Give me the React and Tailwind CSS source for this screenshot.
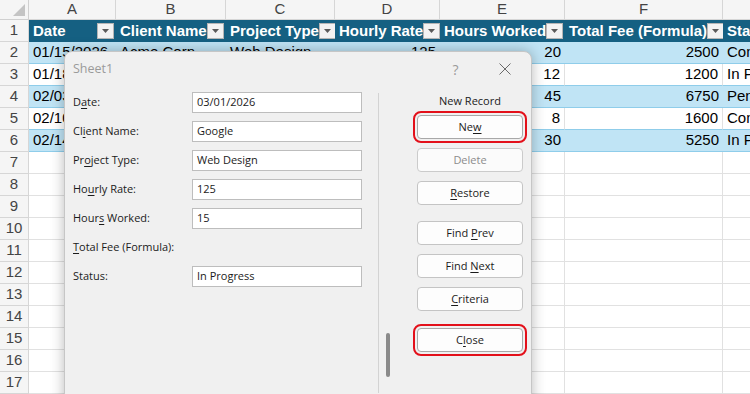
import React from "react";

const colW = ["w-[87px]", "w-[110px]", "w-[109px]", "w-[105px]", "w-[125px]", "w-[158px]", "w-[110px]"];
const letters = ["A", "B", "C", "D", "E", "F", "G"];
const headers = ["Date", "Client Name", "Project Type", "Hourly Rate", "Hours Worked", "Total Fee (Formula)", "Status"];
const rows = [
  ["01/15/2026", "Acme Corp", "Web Design", "125", "20", "2500", "Completed"],
  ["01/18/2026", "Beta LLC", "SEO Audit", "100", "12", "1200", "In Progress"],
  ["02/03/2026", "Cobalt Inc", "App Build", "150", "45", "6750", "Pending"],
  ["02/10/2026", "Delta Co", "Consulting", "200", "8", "1600", "Completed"],
  ["02/14/2026", "Echo Media", "Branding", "175", "30", "5250", "In Progress"],
];
const numeric = [false, false, false, true, true, true, false];

function DropBtn() {
  return (
    <div className="w-[17px] h-[16px] shrink-0 bg-[#f2f2f2] border border-[#b5b5b5] flex items-center justify-center">
      <svg width="7" height="4" viewBox="0 0 7 4">
        <polygon points="0,0 7,0 3.5,4" fill="#5a5a5a" />
      </svg>
    </div>
  );
}

function RowHead({ n }) {
  return (
    <div className="w-[29px] shrink-0 h-full bg-[#f5f5f5] border-r border-b border-[#d6d6d6] flex items-center justify-center text-[15px] text-[#444]">
      {n}
    </div>
  );
}

function Btn({ children, def, disabled }) {
  return (
    <div
      className={
        def
          ? "h-[24px] w-full bg-[#fdfdfd] border border-[#a8a8a8] rounded-[4px] flex items-center justify-center outline-2 outline-[#e3101a] outline-offset-[2px] text-[#1b1b1b]"
          : disabled
          ? "h-[24px] w-full bg-[#fbfbfb] border border-[#cbcbcb] rounded-[4px] flex items-center justify-center text-[#8c8c8c]"
          : "h-[24px] w-full bg-[#fdfdfd] border border-[#c4c4c4] rounded-[4px] flex items-center justify-center text-[#1b1b1b]"
      }
    >
      <span className="whitespace-pre">{children}</span>
    </div>
  );
}

const U = ({ children }) => <span className="underline underline-offset-2">{children}</span>;

function Field({ label, value }) {
  return (
    <div className="h-[21px] flex items-center">
      <div className="w-[119px] shrink-0 whitespace-pre">{label}</div>
      {value !== undefined && (
        <div className="w-[170px] h-[21px] bg-white border border-[#bdbdbd] flex items-center px-[4px]">{value}</div>
      )}
    </div>
  );
}

export default function App() {
  return (
    <div className="relative w-[750px] h-[394px] overflow-hidden bg-white font-['Liberation_Sans',Arial,sans-serif]">
      {/* column headers */}
      <div className="flex h-[20px]">
        <div className="w-[29px] shrink-0 h-full bg-[#f5f5f5] border-r border-b border-[#d0d0d0] flex items-end justify-end p-[3px]">
          <svg width="12" height="12" viewBox="0 0 12 12">
            <polygon points="12,0 12,12 0,12" fill="#c4c4c4" />
          </svg>
        </div>
        {letters.map((l, i) => (
          <div
            key={l}
            className={`${colW[i]} shrink-0 h-full bg-[#f5f5f5] border-r border-b border-[#d6d6d6] flex items-center justify-center text-[15px] text-[#444]`}
          >
            {l}
          </div>
        ))}
      </div>
      {/* table header row */}
      <div className="flex h-[22px]">
        <RowHead n={1} />
        {headers.map((h, i) => (
          <div
            key={h}
            className={`${colW[i]} shrink-0 h-full bg-[#156082] flex items-center justify-between pl-[4px] pr-[2px] overflow-hidden whitespace-nowrap`}
          >
            <span className="text-[15px] font-bold text-white">{h}</span>
            <DropBtn />
          </div>
        ))}
      </div>
      {/* data rows */}
      {rows.map((r, ri) => {
        const blue = ri % 2 === 0;
        return (
          <div key={ri} className="flex h-[22px]">
            <RowHead n={ri + 2} />
            {r.map((c, ci) => (
              <div
                key={ci}
                className={
                  (blue
                    ? "bg-[#c0e4f5] border-b border-[#8fcdea] "
                    : "bg-white border-b border-r border-b-[#8fcdea] border-r-[#e1e1e1] ") +
                  colW[ci] +
                  " shrink-0 h-full flex items-center px-[4px] overflow-hidden whitespace-nowrap text-[15px] text-black " +
                  (numeric[ci] ? "justify-end" : "justify-start")
                }
              >
                {c}
              </div>
            ))}
          </div>
        );
      })}
      {/* empty rows */}
      {[7, 8, 9, 10, 11, 12, 13, 14, 15, 16, 17].map((n) => (
        <div key={n} className="flex h-[22px]">
          <RowHead n={n} />
          {colW.map((w, i) => (
            <div key={i} className={`${w} shrink-0 h-full border-r border-b border-[#e1e1e1] bg-white`} />
          ))}
        </div>
      ))}

      {/* data form dialog */}
      <div className="absolute left-[64px] top-[51px] w-[468px] h-[360px] bg-[#f0f0f0] border border-[#c6c6c6] rounded-t-[8px] shadow-[0_0_14px_rgba(0,0,0,0.28)] font-['Open_Sans',sans-serif] text-[11px] text-[#1b1b1b]">
        <div className="h-[34px] flex items-center pl-[8px] pr-[2px]">
          <span className="text-[12.5px] text-[#9a9a9a]">Sheet1</span>
          <div className="ml-auto flex items-center">
            <div className="w-[49px] flex justify-center text-[14px] text-[#9a9a9a]">?</div>
            <div className="w-[49px] flex justify-center">
              <svg width="12" height="12" viewBox="0 0 12 12">
                <path d="M0.5 0.5 L11.5 11.5 M11.5 0.5 L0.5 11.5" stroke="#6a6a6a" strokeWidth="1" fill="none" />
              </svg>
            </div>
          </div>
        </div>
        <div className="flex">
          <div className="w-[313px] shrink-0 pl-[8px] pt-[6px] flex flex-col gap-[8px]">
            <Field label={<>D<U>a</U>te:</>} value="03/01/2026" />
            <Field label={<>Cl<U>i</U>ent Name:</>} value="Google" />
            <Field label={<>Pr<U>o</U>ject Type:</>} value="Web Design" />
            <Field label={<>Ho<U>u</U>rly Rate:</>} value="125" />
            <Field label={<>Hour<U>s</U> Worked:</>} value="15" />
            <Field label={<><U>T</U>otal Fee (Formula):</>} />
            <Field label="Status:" value="In Progress" />
          </div>
          <div className="w-[39px] shrink-0 mt-[7px] h-[300px] border-l border-[#d3d3d3] pt-[240px] pl-[7px]">
            <div className="w-[4px] h-[44px] bg-[#8a8a8a] rounded-full" />
          </div>
          <div className="w-[106px] shrink-0 pt-[7px] flex flex-col">
            <div className="h-[16px] leading-[16px] text-center">New Record</div>
            <div className="mt-[6px]">
              <Btn def>Ne<U>w</U></Btn>
            </div>
            <div className="mt-[9px]">
              <Btn disabled>Delete</Btn>
            </div>
            <div className="mt-[9px]">
              <Btn><U>R</U>estore</Btn>
            </div>
            <div className="mt-[16px]">
              <Btn>Find <U>P</U>rev</Btn>
            </div>
            <div className="mt-[9px]">
              <Btn>Find <U>N</U>ext</Btn>
            </div>
            <div className="mt-[9px]">
              <Btn><U>C</U>riteria</Btn>
            </div>
            <div className="mt-[17px]">
              <Btn def>C<U>l</U>ose</Btn>
            </div>
          </div>
        </div>
      </div>
    </div>
  );
}
